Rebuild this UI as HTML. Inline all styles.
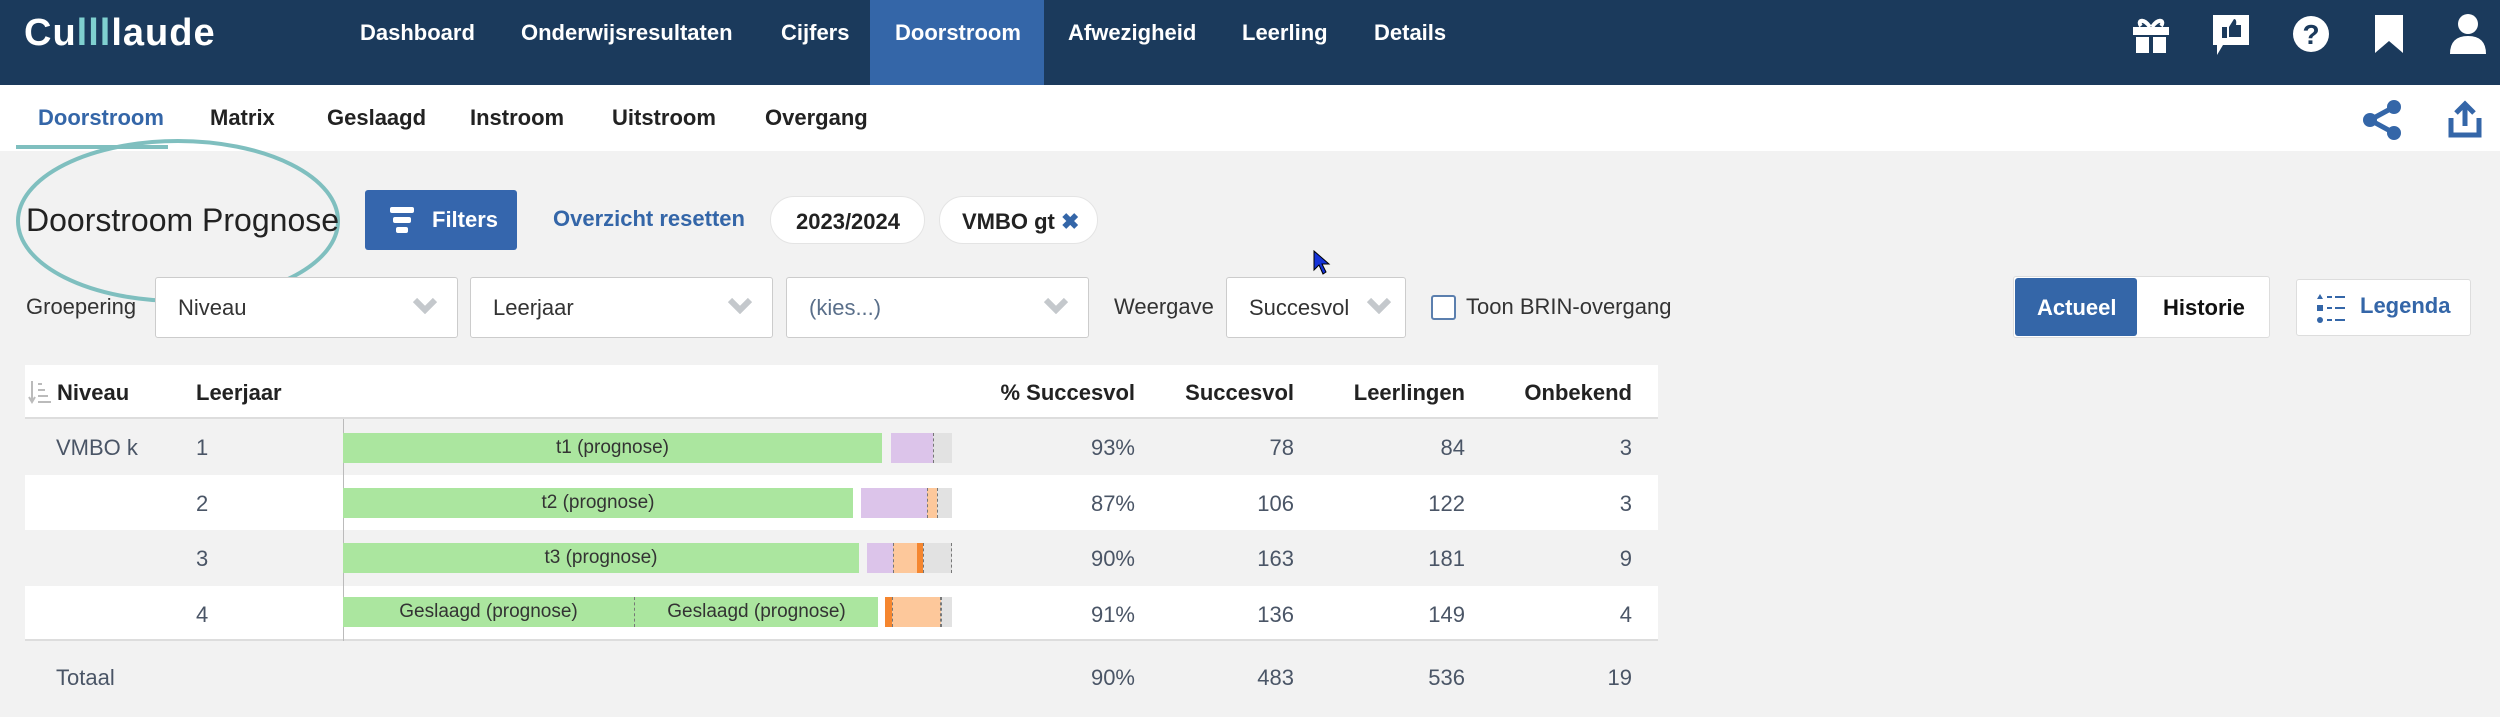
<!DOCTYPE html>
<html><head><meta charset="utf-8"><style>
*{box-sizing:border-box;margin:0;padding:0}
body{width:2500px;height:717px;overflow:hidden;background:#f2f2f2;font-family:"Liberation Sans",sans-serif;position:relative;color:#222}
.a{position:absolute;white-space:nowrap}
.top{position:absolute;left:0;top:0;width:2500px;height:85px;background:#1b3a5c}
.nav{color:#fff;font-size:22px;font-weight:bold;top:20px}
.sub{position:absolute;left:0;top:85px;width:2500px;height:66px;background:#fff}
.sn{font-size:22px;font-weight:bold;top:105px;color:#222}
.sel{position:absolute;background:#fff;border:1px solid #ccc;border-radius:3px;height:61px;top:277px;font-size:22px;padding:17px 22px;color:#333}
.chev{position:absolute;right:20px;top:20px;width:24px;height:16px}
.row{position:absolute;left:25px;width:1633px}
.num{position:absolute;text-align:right;font-size:22px;color:#4a5566}
.bar{position:absolute;height:30px}
.bt{font-size:19px;color:#333;text-align:center;line-height:30px}
</style></head><body>
<div class="top"></div>
<div class="a" style="left:24px;top:12px;color:#fff;font-size:38px;font-weight:bold;letter-spacing:1px">Cu<span style="color:#7fd0d0">lll</span>laude</div>
<div class="a" style="left:870px;top:0;width:174px;height:85px;background:#3466a8"></div>
<div class="a nav" style="left:360px">Dashboard</div>
<div class="a nav" style="left:521px">Onderwijsresultaten</div>
<div class="a nav" style="left:781px">Cijfers</div>
<div class="a nav" style="left:895px">Doorstroom</div>
<div class="a nav" style="left:1068px">Afwezigheid</div>
<div class="a nav" style="left:1242px">Leerling</div>
<div class="a nav" style="left:1374px">Details</div>
<svg class="a" style="left:2133px;top:15px" width="36" height="38" viewBox="0 0 36 38" fill="#fff"><rect x="0" y="12" width="36" height="8"/><rect x="3" y="22" width="13" height="16"/><rect x="20" y="22" width="13" height="16"/><path d="M17 12C10 2 4 6 8 11M19 12C26 2 32 6 28 11" stroke="#fff" stroke-width="4" fill="none"/></svg>
<svg class="a" style="left:2213px;top:15px" width="36" height="40" viewBox="0 0 36 40"><path d="M0 0H36V30H10L4 40V30H0Z" fill="#fff"/><rect x="9" y="12" width="5" height="11" fill="#1b3a5c"/><path d="M16 12L21 4Q24 4 23 10H28V22H16Z" fill="#1b3a5c"/></svg>
<svg class="a" style="left:2292px;top:15px" width="38" height="38"><circle cx="19" cy="19" r="18" fill="#fff"/><text x="19" y="29" text-anchor="middle" font-size="28" font-weight="bold" fill="#1b3a5c" font-family="Liberation Sans">?</text></svg>
<svg class="a" style="left:2375px;top:15px" width="28" height="38"><path d="M0 0H28V38L14 26L0 38Z" fill="#fff"/></svg>
<svg class="a" style="left:2450px;top:14px" width="36" height="40"><circle cx="18" cy="10" r="10" fill="#fff"/><path d="M0 40Q0 22 18 22Q36 22 36 40Z" fill="#fff"/></svg>

<div class="sub"></div>
<div class="a sn" style="left:38px;color:#3466a8">Doorstroom</div>
<div class="a sn" style="left:210px">Matrix</div>
<div class="a sn" style="left:327px">Geslaagd</div>
<div class="a sn" style="left:470px">Instroom</div>
<div class="a sn" style="left:612px">Uitstroom</div>
<div class="a sn" style="left:765px">Overgang</div>
<svg class="a" style="left:2362px;top:100px" width="40" height="40"><g fill="#3466a8"><circle cx="32" cy="7" r="7"/><circle cx="8" cy="20" r="7"/><circle cx="32" cy="33" r="7"/></g><path d="M32 7L8 20L32 33" stroke="#3466a8" stroke-width="5" fill="none"/></svg>
<svg class="a" style="left:2448px;top:100px" width="34" height="38"><path d="M3 18V35H31V18" stroke="#3466a8" stroke-width="5" fill="none"/><path d="M17 26V5M8 13L17 4L26 13" stroke="#3466a8" stroke-width="5" fill="none"/></svg>

<svg class="a" style="left:8px;top:125px" width="345" height="180"><ellipse cx="170" cy="96" rx="160" ry="80" fill="none" stroke="#7fbfbf" stroke-width="4"/><path d="M8 22H160" stroke="#7fbfbf" stroke-width="4"/></svg>
<div class="a" style="left:26px;top:202px;font-size:32px;color:#222">Doorstroom Prognose</div>
<div class="a" style="left:365px;top:190px;width:152px;height:60px;background:#3566ad;border-radius:3px;color:#fff;font-weight:bold;font-size:22px;padding:17px 0 0 67px">Filters</div>
<svg class="a" style="left:390px;top:207px" width="24" height="28" fill="#fff"><rect x="0" y="0" width="24" height="6" rx="2"/><rect x="3" y="10" width="18" height="6" rx="2"/><rect x="6" y="20" width="12" height="6" rx="2"/></svg>
<div class="a" style="left:553px;top:206px;font-size:22px;color:#3466a8;font-weight:bold">Overzicht resetten</div>
<div class="a" style="left:770px;top:196px;width:155px;height:48px;background:#fff;border-radius:24px;border:1px solid #e4e4e4;font-size:22px;font-weight:bold;padding:12px 0 0 25px">2023/2024</div>
<div class="a" style="left:939px;top:196px;width:159px;height:48px;background:#fff;border-radius:24px;border:1px solid #e4e4e4;font-size:22px;font-weight:bold;padding:12px 0 0 22px">VMBO gt <span style="color:#3466a8">✖</span></div>
<svg class="a" style="left:1313px;top:250px" width="18" height="26"><path d="M1 1V20L6 15L10 24L13 22L9 14H16Z" fill="#1533d8" stroke="#000" stroke-width="1"/></svg>

<div class="a" style="left:26px;top:294px;font-size:22px;color:#333">Groepering</div>
<div class="sel" style="left:155px;width:303px">Niveau<svg class="chev" viewBox="0 0 24 16"><path d="M2 2L12 12L22 2" stroke="#c4c8cc" stroke-width="6" fill="none"/></svg></div>
<div class="sel" style="left:470px;width:303px">Leerjaar<svg class="chev" viewBox="0 0 24 16"><path d="M2 2L12 12L22 2" stroke="#c4c8cc" stroke-width="6" fill="none"/></svg></div>
<div class="sel" style="left:786px;width:303px;color:#5a6f8a">(kies...)<svg class="chev" viewBox="0 0 24 16"><path d="M2 2L12 12L22 2" stroke="#c4c8cc" stroke-width="6" fill="none"/></svg></div>
<div class="a" style="left:1114px;top:294px;font-size:22px;color:#333">Weergave</div>
<div class="sel" style="left:1226px;width:180px;padding-left:22px">Succesvol<svg class="chev" viewBox="0 0 24 16" style="right:14px"><path d="M2 2L12 12L22 2" stroke="#c4c8cc" stroke-width="6" fill="none"/></svg></div>
<div class="a" style="left:1431px;top:295px;width:25px;height:25px;border:2px solid #5b7fae;border-radius:3px;background:#fff"></div>
<div class="a" style="left:1466px;top:294px;font-size:22px;color:#333">Toon BRIN-overgang</div>

<div class="a" style="left:2013px;top:276px;width:257px;height:62px;background:#fff;border:1px solid #ddd;border-radius:3px"></div>
<div class="a" style="left:2015px;top:278px;width:122px;height:58px;background:#3466a8;border-radius:3px;color:#fff;font-weight:bold;font-size:22px;padding:17px 0 0 22px">Actueel</div>
<div class="a" style="left:2163px;top:295px;font-weight:bold;font-size:22px;color:#111">Historie</div>
<div class="a" style="left:2296px;top:279px;width:175px;height:57px;background:#fff;border:1px solid #ddd;border-radius:3px"></div>
<svg class="a" style="left:2317px;top:294px" width="30" height="30" fill="#3466a8"><path d="M3 0L6 5H0Z"/><rect x="0" y="11" width="6" height="6"/><circle cx="3" cy="26" r="3"/><rect x="10" y="2" width="5" height="2"/><rect x="18" y="2" width="10" height="2"/><rect x="10" y="13" width="5" height="2"/><rect x="18" y="13" width="10" height="2"/><rect x="10" y="25" width="5" height="2"/><rect x="18" y="25" width="10" height="2"/></svg>
<div class="a" style="left:2360px;top:293px;font-weight:bold;font-size:22px;color:#3466a8">Legenda</div>

<div class="row" style="top:365px;height:54px;background:#fff;border-bottom:2px solid #ddd"></div>
<div class="row" style="top:419px;height:56px;background:#f2f2f2"></div>
<div class="row" style="top:475px;height:55px;background:#fff"></div>
<div class="row" style="top:530px;height:56px;background:#f2f2f2"></div>
<div class="row" style="top:586px;height:55px;background:#fff;border-bottom:2px solid #ddd"></div>
<div class="a" style="left:343px;top:419px;width:1px;height:222px;background:#bbb"></div>
<svg class="a" style="left:28px;top:381px" width="24" height="24"><path d="M4 0V20M1 16L4 21L7 16" stroke="#bbb" stroke-width="2" fill="none"/><g fill="#bbb"><rect x="10" y="2" width="4" height="2"/><rect x="10" y="8" width="7" height="2"/><rect x="10" y="14" width="10" height="2"/><rect x="10" y="20" width="13" height="2"/></g></svg>
<div class="a" style="left:57px;top:380px;font-size:22px;font-weight:bold">Niveau</div>
<div class="a" style="left:196px;top:380px;font-size:22px;font-weight:bold">Leerjaar</div>
<div class="num" style="left:900px;width:235px;top:380px;font-weight:bold;color:#222">% Succesvol</div>
<div class="num" style="left:1100px;width:194px;top:380px;font-weight:bold;color:#222">Succesvol</div>
<div class="num" style="left:1250px;width:215px;top:380px;font-weight:bold;color:#222">Leerlingen</div>
<div class="num" style="left:1400px;width:232px;top:380px;font-weight:bold;color:#222">Onbekend</div>

<div class="a" style="left:56px;top:435px;font-size:22px;color:#4a5566">VMBO k</div>
<div class="a" style="left:196px;top:435px;font-size:22px;color:#4a5566">1</div>
<div class="a" style="left:196px;top:491px;font-size:22px;color:#4a5566">2</div>
<div class="a" style="left:196px;top:546px;font-size:22px;color:#4a5566">3</div>
<div class="a" style="left:196px;top:602px;font-size:22px;color:#4a5566">4</div>
<div class="a" style="left:56px;top:665px;font-size:22px;color:#4a5566">Totaal</div>

<!-- row1 bars -->
<div class="bar bt" style="left:343px;top:433px;width:539px;background:#abe69f">t1 (prognose)</div>
<div class="bar" style="left:891px;top:433px;width:42px;background:#dcc4ea"></div>
<div class="bar" style="left:933px;top:433px;width:19px;background:#e2e2e2;border-left:1px dashed #777"></div>
<!-- row2 -->
<div class="bar bt" style="left:343px;top:488px;width:510px;background:#abe69f">t2 (prognose)</div>
<div class="bar" style="left:861px;top:488px;width:66px;background:#dcc4ea"></div>
<div class="bar" style="left:927px;top:488px;width:10px;background:#fdc89b;border-left:1px dashed #777"></div>
<div class="bar" style="left:937px;top:488px;width:15px;background:#e2e2e2;border-left:1px dashed #777"></div>
<!-- row3 -->
<div class="bar bt" style="left:343px;top:543px;width:516px;background:#abe69f">t3 (prognose)</div>
<div class="bar" style="left:867px;top:543px;width:26px;background:#dcc4ea"></div>
<div class="bar" style="left:893px;top:543px;width:24px;background:#fdc89b;border-left:1px dashed #777"></div>
<div class="bar" style="left:917px;top:543px;width:6px;background:#f5862f"></div>
<div class="bar" style="left:923px;top:543px;width:29px;background:#e2e2e2;border-left:1px dashed #777;border-right:1px dashed #777"></div>
<!-- row4 -->
<div class="bar bt" style="left:343px;top:597px;width:292px;background:#abe69f;border-right:1px dashed #777">Geslaagd (prognose)</div>
<div class="bar bt" style="left:635px;top:597px;width:243px;background:#abe69f">Geslaagd (prognose)</div>
<div class="bar" style="left:885px;top:597px;width:7px;background:#f5862f"></div>
<div class="bar" style="left:892px;top:597px;width:49px;background:#fdc89b;border-left:1px dashed #777;border-right:1px dashed #777"></div>
<div class="bar" style="left:941px;top:597px;width:11px;background:#e2e2e2;border-left:1px dashed #777"></div>

<div class="num" style="left:1000px;width:135px;top:435px">93%</div>
<div class="num" style="left:1150px;width:144px;top:435px">78</div>
<div class="num" style="left:1300px;width:165px;top:435px">84</div>
<div class="num" style="left:1500px;width:132px;top:435px">3</div>
<div class="num" style="left:1000px;width:135px;top:491px">87%</div>
<div class="num" style="left:1150px;width:144px;top:491px">106</div>
<div class="num" style="left:1300px;width:165px;top:491px">122</div>
<div class="num" style="left:1500px;width:132px;top:491px">3</div>
<div class="num" style="left:1000px;width:135px;top:546px">90%</div>
<div class="num" style="left:1150px;width:144px;top:546px">163</div>
<div class="num" style="left:1300px;width:165px;top:546px">181</div>
<div class="num" style="left:1500px;width:132px;top:546px">9</div>
<div class="num" style="left:1000px;width:135px;top:602px">91%</div>
<div class="num" style="left:1150px;width:144px;top:602px">136</div>
<div class="num" style="left:1300px;width:165px;top:602px">149</div>
<div class="num" style="left:1500px;width:132px;top:602px">4</div>
<div class="num" style="left:1000px;width:135px;top:665px">90%</div>
<div class="num" style="left:1150px;width:144px;top:665px">483</div>
<div class="num" style="left:1300px;width:165px;top:665px">536</div>
<div class="num" style="left:1500px;width:132px;top:665px">19</div>
</body></html>
